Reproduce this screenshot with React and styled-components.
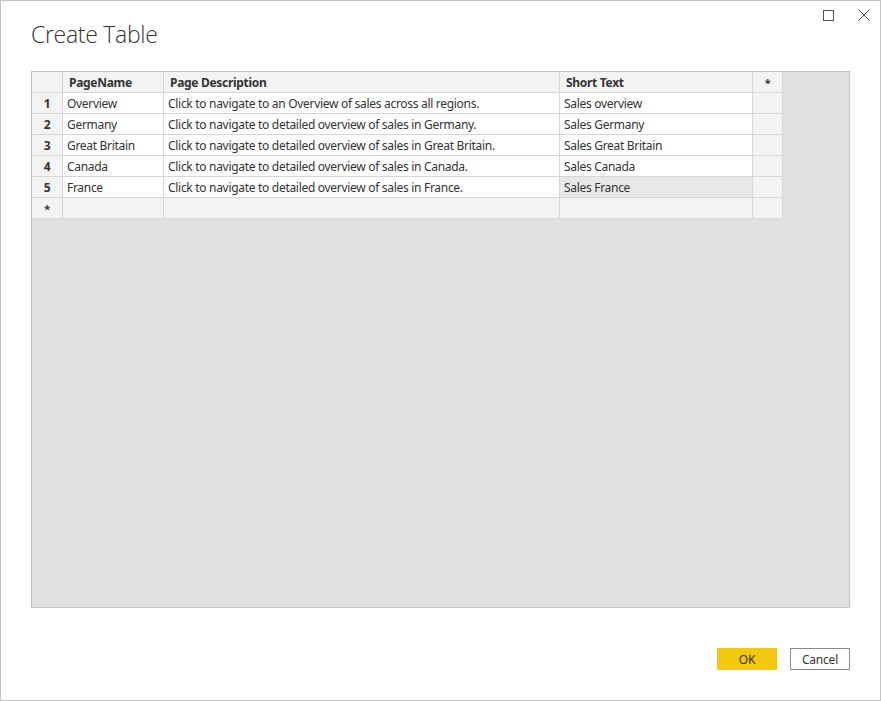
import React from 'react';
import styled, { createGlobalStyle } from 'styled-components';

const GlobalStyle = createGlobalStyle`
  html, body {
    margin: 0;
    padding: 0;
    background: #ffffff;
  }
  body {
    font-family: 'Noto Sans', 'Open Sans', sans-serif;
  }
`;

const Window = styled.div`
  position: relative;
  box-sizing: border-box;
  width: 881px;
  height: 701px;
  border: 1px solid #c4c4c4;
  background: #ffffff;
  display: flex;
  flex-direction: column;
  padding: 0 30px;
`;

const Controls = styled.div`
  position: absolute;
  top: 8px;
  right: 10px;
  display: flex;
  align-items: center;
  gap: 24px;
`;

const ControlButton = styled.div`
  width: 12px;
  height: 12px;
  display: flex;
  align-items: center;
  justify-content: center;
`;

const Title = styled.h1`
  margin: 15px 0 0 0;
  height: 55px;
  font-family: 'Open Sans', 'Noto Sans', sans-serif;
  font-weight: 300;
  font-size: 23px;
  letter-spacing: -0.3px;
  line-height: 36px;
  color: #333333;
`;

const Panel = styled.div`
  box-sizing: border-box;
  width: 819px;
  height: 537px;
  border: 1px solid #c3c3c3;
  background: #e1e1e1;
`;

const Grid = styled.div`
  display: grid;
  grid-template-columns: 31px 101px 396px 193px 30px;
  grid-auto-rows: 21px;
  width: max-content;
`;

const Cell = styled.div`
  box-sizing: border-box;
  border-right: 1px solid #d6d6d6;
  border-bottom: 1px solid #d6d6d6;
  background: ${(p) => (p.$shade ? '#f3f3f3' : p.$selected ? '#e8e8e8' : '#ffffff')};
  color: #333333;
  font-size: 12px;
  letter-spacing: -0.3px;
  line-height: 21px;
  padding: 0 0 0 4px;
  white-space: nowrap;
  overflow: hidden;
`;

const HeaderCell = styled(Cell)`
  font-weight: 700;
  padding-left: 6px;
`;

const RowNum = styled(Cell)`
  font-weight: 700;
  text-align: center;
  padding: 0;
`;

const Star = styled(Cell)`
  text-align: center;
  padding: 0;
  font-size: 11px;
  font-weight: 700;
`;

const Footer = styled.div`
  display: flex;
  justify-content: flex-end;
  gap: 13px;
  margin-top: 40px;
  width: 819px;
`;

const Button = styled.button`
  box-sizing: border-box;
  width: 60px;
  height: 22px;
  padding: 0;
  font-family: 'Noto Sans', 'Open Sans', sans-serif;
  font-size: 12px;
  letter-spacing: -0.2px;
  color: #333333;
  background: ${(p) => (p.$primary ? '#f2c811' : '#ffffff')};
  border: 1px solid ${(p) => (p.$primary ? '#f2c811' : '#8a8a8a')};
`;

const rows = [
  ['Overview', 'Click to navigate to an Overview of sales across all regions.', 'Sales overview'],
  ['Germany', 'Click to navigate to detailed overview of sales in Germany.', 'Sales Germany'],
  ['Great Britain', 'Click to navigate to detailed overview of sales in Great Britain.', 'Sales Great Britain'],
  ['Canada', 'Click to navigate to detailed overview of sales in Canada.', 'Sales Canada'],
  ['France', 'Click to navigate to detailed overview of sales in France.', 'Sales France'],
];

const App = () => (
  <>
    <GlobalStyle />
    <Window>
      <Controls>
        <ControlButton>
          <svg width="11" height="11" viewBox="0 0 11 11">
            <rect x="0.5" y="0.5" width="10" height="10" fill="none" stroke="#555" strokeWidth="1" />
          </svg>
        </ControlButton>
        <ControlButton>
          <svg width="12" height="12" viewBox="0 0 12 12">
            <path d="M0.5 0.5 L11.5 11.5 M11.5 0.5 L0.5 11.5" stroke="#555" strokeWidth="1" />
          </svg>
        </ControlButton>
      </Controls>
      <Title>Create Table</Title>
      <Panel>
        <Grid>
          <RowNum $shade />
          <HeaderCell $shade>PageName</HeaderCell>
          <HeaderCell $shade>Page Description</HeaderCell>
          <HeaderCell $shade>Short Text</HeaderCell>
          <Star $shade>*</Star>
          {rows.map(([name, desc, short], i) => (
            <React.Fragment key={i}>
              <RowNum $shade>{i + 1}</RowNum>
              <Cell>{name}</Cell>
              <Cell>{desc}</Cell>
              <Cell $selected={i === 4}>{short}</Cell>
              <Star $shade />
            </React.Fragment>
          ))}
          <Star $shade>*</Star>
          <Cell $shade />
          <Cell $shade />
          <Cell $shade />
          <Star $shade />
        </Grid>
      </Panel>
      <Footer>
        <Button $primary>OK</Button>
        <Button>Cancel</Button>
      </Footer>
    </Window>
  </>
);

export default App;
